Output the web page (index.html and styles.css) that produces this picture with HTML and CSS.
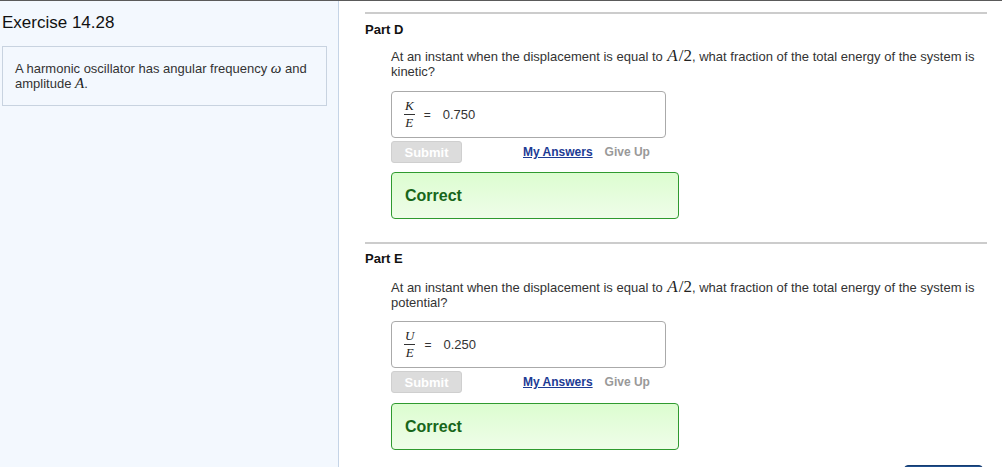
FILE: index.html
```html
<!DOCTYPE html>
<html>
<head>
<meta charset="utf-8">
<link rel="stylesheet" href="styles.css">
</head>
<body>
<div class="page">
  <aside class="side">
    <h1 class="title">Exercise 14.28</h1>
    <div class="intro"><span>A harmonic oscillator has angular frequency </span><span class="m">ω</span><span> and</span> <span>amplitude </span><span class="m">A</span><span>.</span></div>
  </aside>
  <main class="main">
    <section class="part part-d">
      <h2 class="part-title">Part D</h2>
      <div class="part-body">
        <p class="question"><span>At an instant when the displacement is equal to </span><span class="m">A</span><span class="mr">/2</span><span>, what fraction of the total energy of the system is</span> <span>kinetic?</span></p>
        <div class="answer">
          <span class="frac"><span class="num">K</span><span class="den">E</span></span>
          <span class="eq">=</span>
          <span class="val">0.750</span>
        </div>
        <div class="actions">
          <button class="submit">Submit</button>
          <a class="my-answers">My Answers</a>
          <span class="give-up">Give Up</span>
        </div>
        <div class="correct">Correct</div>
      </div>
    </section>
    <section class="part part-e">
      <h2 class="part-title">Part E</h2>
      <div class="part-body">
        <p class="question"><span>At an instant when the displacement is equal to </span><span class="m">A</span><span class="mr">/2</span><span>, what fraction of the total energy of the system is</span> <span>potential?</span></p>
        <div class="answer">
          <span class="frac"><span class="num">U</span><span class="den">E</span></span>
          <span class="eq">=</span>
          <span class="val">0.250</span>
        </div>
        <div class="actions">
          <button class="submit">Submit</button>
          <a class="my-answers">My Answers</a>
          <span class="give-up">Give Up</span>
        </div>
        <div class="correct">Correct</div>
      </div>
    </section>
    <div class="continue-row"><button class="continue" aria-label="Continue"></button></div>
  </main>
</div>
</body>
</html>
```
FILE: styles.css
```css
html, body {
  margin: 0;
  padding: 0;
  background: #ffffff;
}
body {
  font-family: "Liberation Sans", Arial, sans-serif;
  color: #222;
  overflow: hidden;
  height: 467px;
}
.page {
  display: flex;
  border-top: 1px solid #5a5a5a;
  height: 466px;
}
.side {
  width: 339px;
  flex: 0 0 339px;
  background: #f3f8fe;
  border-right: 1px solid #c5d4e6;
  box-sizing: border-box;
}
.title {
  margin: 12px 0 0 2px;
  font-size: 17px;
  font-weight: normal;
  line-height: 20px;
  color: #111;
}
.intro {
  margin: 13px 11px 0 2px;
  border: 1px solid #c8d3e0;
  background: #f3f8fe;
  padding: 14px 12px 14px 12px;
  font-size: 13px;
  line-height: 15px;
  color: #333;
}
.m, .mr {
  display: inline-block;
  font-family: "Liberation Serif", "DejaVu Serif", serif;
  font-size: 17px;
  line-height: 12px;
  height: 12px;
  color: #222;
}
.m {
  font-style: italic;
  margin: 0 1px;
}
.intro .m {
  font-size: 15px;
  line-height: 11px;
  height: 11px;
  margin: 0;
}
.main {
  flex: 1;
  padding: 11px 15px 0 26px;
  overflow: hidden;
}
.part {
  border-top: 2px solid #cccccc;
}
.part-e {
  margin-top: 23px;
}
.part-title {
  margin: 8px 0 0 0;
  font-size: 13px;
  line-height: 16px;
  font-weight: bold;
  color: #111;
}
.part-e .part-title {
  margin-top: 7px;
}
.part-body {
  padding-left: 26px;
}
.question {
  margin: 11px 0 0 0;
  font-size: 13px;
  line-height: 15px;
  color: #333;
}
.part-e .question {
  margin-top: 13px;
}
.answer {
  margin-top: 12px;
  width: 275px;
  height: 47px;
  box-sizing: border-box;
  border: 1px solid #aaaaaa;
  border-radius: 4px;
  display: flex;
  align-items: center;
  padding-left: 12px;
  font-size: 13px;
  color: #333;
}
.part-e .answer {
  margin-top: 11px;
}
.frac {
  display: inline-flex;
  flex-direction: column;
  align-items: center;
  font-family: "Liberation Serif", "DejaVu Serif", serif;
  font-style: italic;
  font-size: 13px;
  line-height: 12px;
  color: #222;
}
.num {
  border-bottom: 1px solid #333;
  padding: 0 1px 2px;
}
.den {
  padding-top: 2px;
}
.eq {
  margin-left: 9px;
  font-size: 12px;
}
.val {
  margin-left: 12px;
  font-size: 13px;
}
.actions {
  margin-top: 3px;
  display: flex;
  align-items: center;
  height: 22px;
}
.submit {
  width: 71px;
  height: 22px;
  background: #dcdcdc;
  border: 1px solid #cfcfcf;
  border-radius: 3px;
  color: #ffffff;
  font-family: "Liberation Sans", Arial, sans-serif;
  font-weight: bold;
  font-size: 13px;
  padding: 0;
}
.my-answers {
  margin-left: 61px;
  color: #1d3b94;
  font-weight: bold;
  font-size: 12px;
  text-decoration: underline;
}
.give-up {
  margin-left: 12px;
  color: #999999;
  font-weight: bold;
  font-size: 12px;
}
.correct {
  margin-top: 9px;
  width: 288px;
  height: 47px;
  box-sizing: border-box;
  border: 1px solid #2f9a2f;
  border-radius: 4px;
  background: linear-gradient(#dcfdd0, #effde9);
  display: flex;
  align-items: center;
  padding-left: 13px;
  font-size: 16px;
  font-weight: bold;
  color: #17661a;
}
.part-e .correct {
  margin-top: 10px;
}
.continue-row {
  display: flex;
  justify-content: flex-end;
  margin-top: 15px;
  padding-right: 4px;
}
.continue {
  width: 79px;
  height: 28px;
  background: #1f4f8e;
  border: 1px solid #163d70;
  border-radius: 4px;
  padding: 0;
}
```
